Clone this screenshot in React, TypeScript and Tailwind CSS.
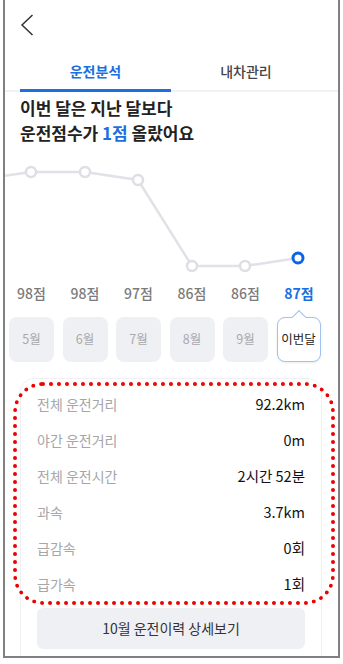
const scores = [
  { score: '98점', month: '5월' },
  { score: '98점', month: '6월' },
  { score: '97점', month: '7월' },
  { score: '86점', month: '8월' },
  { score: '86점', month: '9월' },
  { score: '87점', month: '이번달', current: true },
]

const stats = [
  ['전체 운전거리', '92.2km'],
  ['야간 운전거리', '0m'],
  ['전체 운전시간', '2시간 52분'],
  ['과속', '3.7km'],
  ['급감속', '0회'],
  ['급가속', '1회'],
]

// chart points in page coordinates
const points = [
  [31, 173],
  [85, 173],
  [138, 181],
  [192, 267],
  [245, 267],
]

function ScoreChart() {
  const line = [[3, 177], ...points, [298, 259]].map((p) => p.join(',')).join(' ')
  return (
    <svg width="332" height="130" viewBox="5 150 332 130" className="block">
      <polyline points={line} fill="none" stroke="#e1e1e7" strokeWidth="2.5" />
      {points.map(([x, y]) => (
        <circle key={x} cx={x} cy={y} r="5" fill="white" stroke="#dedee4" strokeWidth="2.5" />
      ))}
      <circle cx="298" cy="259" r="5" fill="white" stroke="#0a64e6" strokeWidth="3" />
    </svg>
  )
}

export default function App() {
  return (
    <div className="w-[343px] h-[664px] bg-white overflow-hidden" style={{ fontFamily: '"Noto Sans CJK KR", "Noto Sans", sans-serif' }}>
      <div className="relative ml-[3px] w-[337px] h-[658px] border-x-2 border-b-2 border-[#808080] overflow-hidden">
        {/* Header */}
        <div className="h-[52px] pl-[15px] pt-[14px]">
          <svg width="14" height="22" viewBox="0 0 14 22">
            <polyline points="12.5,1 2,11 12.5,21" fill="none" stroke="#333" strokeWidth="1.5" />
          </svg>
        </div>

        {/* Tabs */}
        <div className="flex px-[15px] border-b-2 border-[#f2f2f4]">
          <div className="w-[151px] h-[38px] flex items-center justify-center text-[14px] font-bold text-[#1b6fe0] relative">
            운전분석
            <div className="absolute left-0 right-0 -bottom-[2px] h-[3px] bg-[#1b6fe0]" />
          </div>
          <div className="w-[150px] h-[38px] flex items-center justify-center text-[14px] font-medium text-[#444]">
            내차관리
          </div>
        </div>

        {/* Title */}
        <div className="px-[15px] pt-[3px] text-[17px] font-bold leading-[25px] text-[#222]">
          <p>이번 달은 지난 달보다</p>
          <p>
            운전점수가 <span className="text-[#1b6fe0]">1점</span> 올랐어요
          </p>
        </div>

        <div className="mt-[4px]">
          <ScoreChart />
        </div>

        {/* Scores */}
        <div className="flex gap-[8.5px] pl-[4px] mt-[2px]">
          {scores.map((s) => (
            <div
              key={s.month}
              className={`w-[45px] text-center text-[14px] leading-[24px] ${s.current ? 'text-[#1b6fe0] font-bold' : 'text-[#7b7b7b] font-medium'}`}
            >
              {s.score}
            </div>
          ))}
        </div>

        {/* Months */}
        <div className="flex gap-[8.5px] pl-[4px] mt-[12px]">
          {scores.map((s) =>
            s.current ? (
              <div key={s.month} className="relative w-[44px] h-[45px] rounded-[8px] border border-[#9fc2ee] bg-white flex items-center justify-center text-[12.5px] text-[#222] shadow-[0_1px_3px_rgba(0,0,0,0.08)]">
                <div className="absolute -top-[6px] left-1/2 -ml-[5px] w-[10px] h-[10px] rotate-45 bg-white border-l border-t border-[#9fc2ee]" />
                <span className="relative">이번달</span>
              </div>
            ) : (
              <div key={s.month} className="w-[45px] h-[45px] rounded-[8px] bg-[#eff0f4] flex items-center justify-center text-[12.5px] text-[#a9a9ad]">
                {s.month}
              </div>
            )
          )}
        </div>

        {/* Stats card */}
        <div className="mt-[16px] ml-[15px] w-[302px] h-[300px] rounded-t-[14px] border border-[#f0f0f3] pt-[7px] px-[16px]">
          {stats.map(([label, value]) => (
            <div key={label} className="h-[36px] flex items-center justify-between">
              <span className="text-[14px] text-[#a6a6aa]">{label}</span>
              <span className="text-[14.5px] font-normal text-[#111]">{value}</span>
            </div>
          ))}
          <button className="mt-[6px] w-full h-[41px] rounded-[6px] bg-[#eff0f4] text-[14px] text-[#333]">
            10월 운전이력 상세보기
          </button>
        </div>

        {/* Highlight */}
        <div className="absolute left-[8px] top-[382px] w-[322px] h-[223px] rounded-[30px] border-4 border-dotted border-[#ee0000] pointer-events-none" />
      </div>
    </div>
  )
}
